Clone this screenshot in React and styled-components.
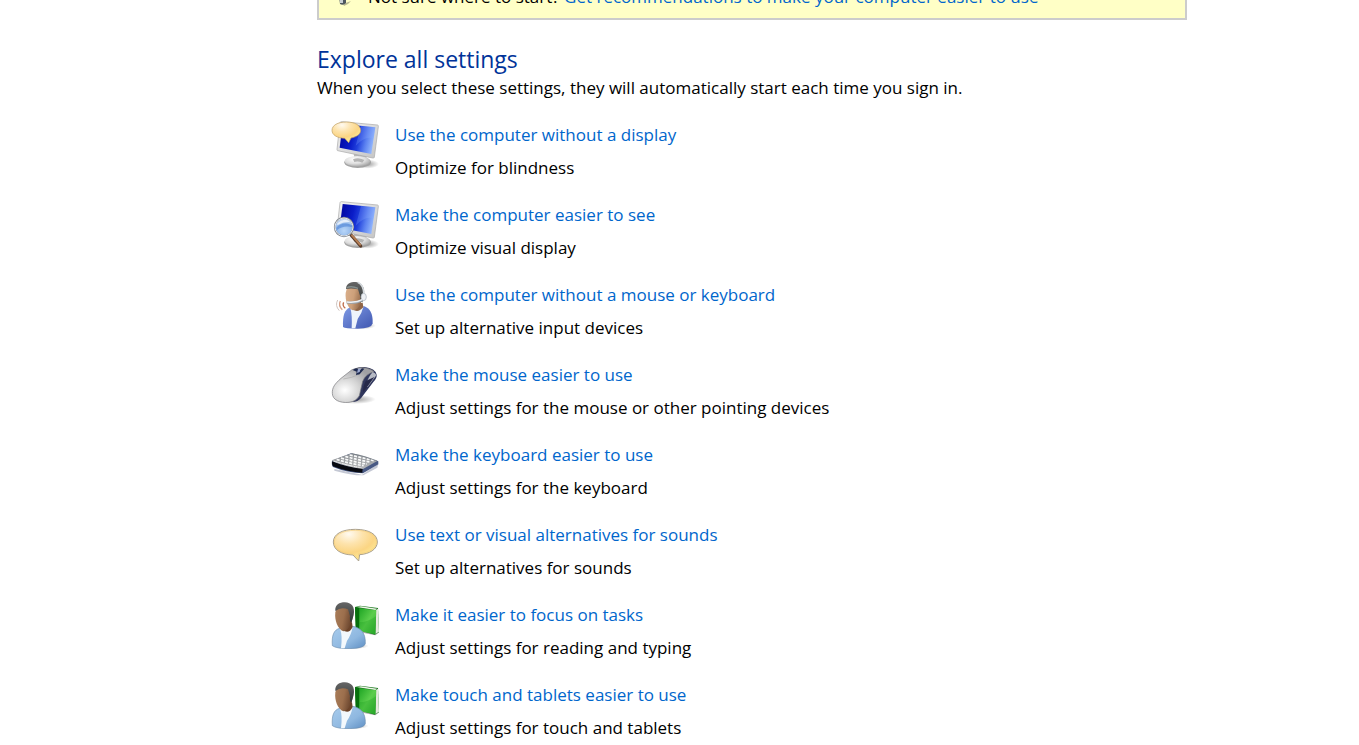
import React from "react";
import styled, { createGlobalStyle } from "styled-components";

const GlobalStyle = createGlobalStyle`
  body {
    margin: 0;
    background-color: #fff;
    color: #000;
    font-family: "Open Sans", "Noto Sans", sans-serif;
    font-size: 17px;
    overflow: hidden;
  }
`;

const Page = styled.main`
  display: flow-root;
  padding: 0 172px 0 317px;
`;

/* the page is scrolled a little, so the banner starts above the window */
const Banner = styled.div`
  display: flex;
  align-items: center;
  gap: 16px;
  margin: -26px 0 23px;
  padding: 9px 17px;
  border: solid 2px #cccccc;
  background-color: #ffffc6;
`;

const BannerText = styled.p`
  margin: 0;
  line-height: 24px;
`;

const Link = styled.a`
  color: #0066cc;
  text-decoration: none;

  &:hover {
    text-decoration: underline;
  }
`;

const Title = styled.h1`
  margin: 0;
  color: #003399;
  font-size: 23px;
  font-weight: 400;
  line-height: 32px;
`;

const Intro = styled.p`
  margin: 0 0 18px;
  line-height: 25px;
`;

const SettingsList = styled.ul`
  display: flex;
  flex-flow: column nowrap;
  gap: 14px;
  margin: 0;
  padding: 0 0 0 14px;
  list-style: none;
`;

const Setting = styled.li`
  display: flex;
  align-items: flex-start;
  gap: 16px;
  line-height: 33px;
`;

const Description = styled.p`
  margin: 0;
`;

const IconSvg = styled.svg`
  flex: none;
  display: block;
  width: 48px;
  height: 48px;
  margin-top: 3px;
`;

const BulbSvg = styled.svg`
  flex: none;
  display: block;
  width: 16px;
  height: 24px;
`;

const DefsSvg = styled.svg`
  display: block;
  width: 0;
  height: 0;
`;

const Gradients = () => (
  <DefsSvg aria-hidden="true">
    <defs>
      <linearGradient id="screen" x1="0" y1="0.35" x2="1" y2="0.55">
        <stop offset="0" stopColor="#0008a0" />
        <stop offset="0.35" stopColor="#0a1cc8" />
        <stop offset="0.55" stopColor="#2040dc" />
        <stop offset="0.75" stopColor="#5a80f0" />
        <stop offset="1" stopColor="#9cc0ff" />
      </linearGradient>
      <linearGradient id="frame" x1="0" y1="0" x2="1" y2="1">
        <stop offset="0" stopColor="#f4f4f4" />
        <stop offset="1" stopColor="#c4c4c4" />
      </linearGradient>
      <radialGradient id="stand" cx="0.4" cy="0.3" r="0.7">
        <stop offset="0" stopColor="#ffffff" />
        <stop offset="0.6" stopColor="#dedede" />
        <stop offset="1" stopColor="#a8a8a8" />
      </radialGradient>
      <radialGradient id="bubble" cx="0.35" cy="0.15" r="0.9">
        <stop offset="0" stopColor="#fffaf0" />
        <stop offset="0.35" stopColor="#fde3ac" />
        <stop offset="0.65" stopColor="#fbd583" />
        <stop offset="1" stopColor="#fff6a0" />
      </radialGradient>
      <radialGradient id="lens" cx="0.5" cy="0.7" r="0.7">
        <stop offset="0" stopColor="#b8d6f8" />
        <stop offset="0.6" stopColor="#8fb6ea" />
        <stop offset="1" stopColor="#dbe7f5" />
      </radialGradient>
      <linearGradient id="skin" x1="0" y1="0.2" x2="1" y2="0.5">
        <stop offset="0" stopColor="#d9ae8a" />
        <stop offset="0.5" stopColor="#cda07a" />
        <stop offset="1" stopColor="#8f6546" />
      </linearGradient>
      <linearGradient id="darkSkin" x1="0" y1="0.2" x2="1" y2="0.5">
        <stop offset="0" stopColor="#a87c58" />
        <stop offset="0.5" stopColor="#9c6f4d" />
        <stop offset="1" stopColor="#64402a" />
      </linearGradient>
      <linearGradient id="hair" x1="0" y1="0" x2="0" y2="1">
        <stop offset="0" stopColor="#666666" />
        <stop offset="1" stopColor="#303636" />
      </linearGradient>
      <linearGradient id="vest" x1="0" y1="0" x2="1" y2="1">
        <stop offset="0" stopColor="#7f9be6" />
        <stop offset="1" stopColor="#4057b0" />
      </linearGradient>
      <linearGradient id="shirt" x1="0" y1="0" x2="1" y2="1">
        <stop offset="0" stopColor="#a9cdee" />
        <stop offset="0.6" stopColor="#8fb8e0" />
        <stop offset="1" stopColor="#5f8fc4" />
      </linearGradient>
      <linearGradient id="cover" x1="0" y1="0" x2="1" y2="1">
        <stop offset="0" stopColor="#1fa524" />
        <stop offset="0.5" stopColor="#5cce4c" />
        <stop offset="1" stopColor="#2bac2c" />
      </linearGradient>
      <radialGradient id="mouseBody" cx="0.3" cy="0.65" r="0.7">
        <stop offset="0" stopColor="#ffffff" />
        <stop offset="0.5" stopColor="#d4d4d4" />
        <stop offset="1" stopColor="#a0a0a4" />
      </radialGradient>
      <linearGradient id="keys" x1="0" y1="0" x2="0" y2="1">
        <stop offset="0" stopColor="#8e9296" />
        <stop offset="1" stopColor="#b4b6b8" />
      </linearGradient>
      <radialGradient id="shadow">
        <stop offset="0" stopColor="#000" stopOpacity="0.4" />
        <stop offset="1" stopColor="#000" stopOpacity="0" />
      </radialGradient>
    </defs>
  </DefsSvg>
);

const Icon = ({ children }) => (
  <IconSvg viewBox="18 18 144 144" aria-hidden="true">
    {children}
  </IconSvg>
);

const Monitor = () => (
  <>
    <ellipse cx="126" cy="147" rx="36" ry="14" fill="url(#shadow)" />
    <path d="M84 110L125 118L124 140L92 140Z" fill="#b8b8b8" />
    <ellipse cx="98" cy="142" rx="40" ry="17" fill="#a2a2a2" />
    <ellipse cx="97" cy="139" rx="38" ry="16" fill="url(#stand)" />
    <path d="M84 133Q100 126 118 135L112 143Q98 137 88 141Z" fill="#b4b4b4" />
    <path
      d="M49 20L158 30Q161 31 160 35L148 127Q147 130 143 129L38 107Q35 106 36 103L45 23Q46 20 49 20Z"
      fill="url(#frame)"
      stroke="#a8a8a8"
      strokeWidth="2"
    />
    <path d="M53 27L151 37L139 117L44 98Z" fill="url(#screen)" />
    <path d="M108 33L151 37L146 70Q120 62 92 92Z" fill="#8fb0ff" opacity="0.25" />
  </>
);

const DisplayIcon = () => (
  <Icon>
    <Monitor />
    <path
      d="M64 21C90 21 107 31 107 46C107 58 95 66 78 69L71 83L59 70C36 69 21 60 21 46C21 31 38 21 64 21Z"
      fill="url(#bubble)"
      stroke="#bd9b5d"
      strokeWidth="2"
    />
  </Icon>
);

const MagnifierIcon = () => (
  <Icon>
    <Monitor />
    <path d="M78 120L107 153" stroke="#5a3c2a" strokeWidth="10" strokeLinecap="round" />
    <path d="M81 121L105 149" stroke="#b57e54" strokeWidth="6" strokeLinecap="round" />
    <circle cx="57" cy="96" r="28" fill="url(#lens)" stroke="#777e88" strokeWidth="5" />
    <circle cx="57" cy="96" r="27" fill="none" stroke="#e3e6ea" strokeWidth="3" />
    <path d="M34 98Q55 77 82 91L82 97Q56 90 35 106Z" fill="#4f83d5" opacity="0.6" />
    <path d="M37 85Q57 66 75 81Q55 80 37 91Z" fill="#fff" opacity="0.7" />
  </Icon>
);

const HeadsetIcon = () => (
  <Icon>
    <ellipse cx="112" cy="152" rx="40" ry="11" fill="url(#shadow)" />
    <path
      d="M54 156C53 123 57 104 77 96L116 93C135 99 144 115 143 145Q140 161 98 161Q60 161 54 156Z"
      fill="url(#vest)"
    />
    <path d="M76 98L116 94Q111 114 98 132L91 160H80Q82 120 76 98Z" fill="#eef4fc" />
    <path d="M81 88L113 83L115 97Q97 117 82 101Z" fill="#8f6547" />
    <path
      d="M66 38C77 27 103 32 111 47C116 70 106 104 84 106C68 101 60 75 62 54Z"
      fill="url(#skin)"
    />
    <path
      d="M63 42C63 26 76 21 91 21C108 21 121 36 117 58L112 82Q105 78 106 65L99 43Q79 38 63 42Z"
      fill="url(#hair)"
    />
    <path d="M64 39Q78 31 99 40" fill="none" stroke="#86908f" strokeWidth="4" />
    <path d="M98 22Q116 29 117 59" fill="none" stroke="#d5dade" strokeWidth="5" />
    <ellipse cx="116" cy="66" rx="8" ry="11" fill="#edf0f4" stroke="#a6afb8" strokeWidth="2" />
    <path d="M112 75Q94 86 65 82" fill="none" stroke="#98a3ac" strokeWidth="7" />
    <path d="M112 74Q94 84 66 81" fill="none" stroke="#eef0f4" strokeWidth="4" />
    <path d="M56 82Q51 92 61 100" fill="none" stroke="#bf6e4e" strokeWidth="4" />
    <path d="M46 78Q39 92 52 104" fill="none" stroke="#d7a086" strokeWidth="4" />
    <path d="M38 75Q29 92 43 107" fill="none" stroke="#d0c4bf" strokeWidth="3" />
  </Icon>
);

const MouseIcon = () => (
  <Icon>
    <ellipse cx="91" cy="133" rx="61" ry="14" fill="url(#shadow)" />
    <path
      d="M76 52Q95 34 119 36Q151 40 155 59Q157 68 145 81L109 128Q97 143 73 140Z"
      fill="#30365c"
    />
    <path
      d="M22 115C21 98 29 87 48 70L81 44Q103 34 123 39Q140 43 147 50Q121 57 113 79L103 122Q94 139 72 142C44 145 22 134 22 115Z"
      fill="url(#mouseBody)"
      stroke="#77777b"
      strokeWidth="2"
    />
    <path
      d="M83 45Q90 39 97 40L103 48L111 40L118 41L104 58L93 61L95 50Z"
      fill="#202b50"
    />
    <path d="M99 42L107 39L104 51L96 54Z" fill="#9aa8d0" />
    <path d="M143 51Q152 54 154 61L128 96L120 96Q129 66 143 51Z" fill="#b6bac4" />
    <path d="M122 78L148 66L133 87L115 112Q112 99 122 78Z" fill="#252849" />
    <path d="M55 72Q83 68 98 60" fill="none" stroke="#aaa" strokeWidth="2" />
  </Icon>
);

const KeyboardIcon = () => (
  <Icon>
    <path d="M28 102L111 119L160 86L157 98L115 121Q84 122 28 107Z" fill="#c4c8d4" />
    <path
      d="M21 77L78 55Q115 64 160 79V88L114 115Q67 114 24 96Q19 91 21 77Z"
      fill="#485984"
    />
    <path d="M21 79Q66 97 113 100L112 113Q70 112 24 94Q20 90 21 79Z" fill="#080a11" />
    <path d="M22 75L80 55Q117 61 157 78L114 102Q63 96 22 79Z" fill="url(#keys)" />
    <path
      d="M35 73Q78 87 116 92M48 69Q91 82 126 87M61 64Q101 76 136 81M74 60Q112 68 147 77"
      fill="none"
      stroke="#f9fafa"
      strokeWidth="5"
      strokeDasharray="9 4"
    />
    <path d="M26 78Q72 93 110 98" fill="none" stroke="#f1f1f1" strokeWidth="3" strokeDasharray="12 2 8 2 35 2" />
    <path d="M80 56Q116 62 157 78" fill="none" stroke="#6e7580" strokeWidth="2" />
  </Icon>
);

const BubbleIcon = () => (
  <Icon>
    <path
      d="M91 43C132 43 157 58 157 81C157 103 133 117 104 119L101 138L84 120C48 119 25 104 25 81C25 58 50 43 91 43Z"
      fill="url(#bubble)"
      stroke="#aaa18f"
      strokeWidth="3"
    />
    <path
      d="M91 46C130 46 154 60 154 81C154 101 130 114 101 116L99 130L86 117C50 116 28 102 28 81C28 60 52 46 91 46Z"
      fill="none"
      stroke="#f5cf7f"
      strokeWidth="2"
    />
  </Icon>
);

const BookIcon = () => (
  <Icon>
    <path d="M101 111L151 121L164 111L156 105Z" fill="#555" opacity="0.5" />
    <path d="M90 36L105 32L159 39L162 111L149 119L93 103Z" fill="#1b7a1f" />
    <path d="M95 36L108 34L156 41L151 45Z" fill="#f1f4e9" />
    <path d="M153 45L159 41L162 110L151 117Z" fill="#e6e9df" />
    <path d="M90 36L103 40L103 108L92 103Z" fill="#07700e" />
    <path d="M103 40L154 46L151 118L103 108Z" fill="url(#cover)" />
    <path d="M103 82Q128 82 153 64L151 118L103 108Z" fill="#119316" opacity="0.25" />
    <ellipse cx="82" cy="153" rx="49" ry="10" fill="url(#shadow)" />
    <path
      d="M22 152C20 121 26 105 44 100L84 94C108 99 122 114 121 146Q118 160 73 161Q34 161 22 152Z"
      fill="url(#shirt)"
      stroke="#6f91b2"
      strokeWidth="2"
    />
    <path d="M45 101L83 95Q79 119 66 137L59 160H48Q53 122 45 101Z" fill="#f3f8fc" />
    <path d="M49 85L81 82L83 96Q70 121 52 103Z" fill="#6d442a" />
    <path
      d="M36 38C47 27 75 33 82 48C88 70 74 106 55 109C38 103 28 76 31 52Z"
      fill="url(#darkSkin)"
    />
    <path
      d="M31 48C29 29 43 22 60 22C79 23 91 35 86 60L79 83Q73 77 75 63L69 43Q48 34 31 48Z"
      fill="url(#hair)"
    />
  </Icon>
);

const BulbIcon = () => (
  <BulbSvg viewBox="0 0 16 24" aria-hidden="true">
    <circle cx="7" cy="6" r="5" fill="#ffe88a" stroke="#b5a254" />
    <path d="M7 19L15 16L12 19L8 21Z" fill="#8a8a70" opacity="0.6" />
    <path d="M3 11H10V18Q7 21 4 19Z" fill="#4d5660" />
    <path d="M4 12H7V18H4Z" fill="#c7ced4" />
  </BulbSvg>
);

const settings = [
  {
    icon: DisplayIcon,
    title: "Use the computer without a display",
    description: "Optimize for blindness"
  },
  {
    icon: MagnifierIcon,
    title: "Make the computer easier to see",
    description: "Optimize visual display"
  },
  {
    icon: HeadsetIcon,
    title: "Use the computer without a mouse or keyboard",
    description: "Set up alternative input devices"
  },
  {
    icon: MouseIcon,
    title: "Make the mouse easier to use",
    description: "Adjust settings for the mouse or other pointing devices"
  },
  {
    icon: KeyboardIcon,
    title: "Make the keyboard easier to use",
    description: "Adjust settings for the keyboard"
  },
  {
    icon: BubbleIcon,
    title: "Use text or visual alternatives for sounds",
    description: "Set up alternatives for sounds"
  },
  {
    icon: BookIcon,
    title: "Make it easier to focus on tasks",
    description: "Adjust settings for reading and typing"
  },
  {
    icon: BookIcon,
    title: "Make touch and tablets easier to use",
    description: "Adjust settings for touch and tablets"
  }
];

const App = () => (
  <>
    <GlobalStyle />
    <Gradients />
    <Page>
      <Banner>
        <BulbIcon />
        <BannerText>
          Not sure where to start?{" "}
          <Link href="#recommendations">
            Get recommendations to make your computer easier to use
          </Link>
        </BannerText>
      </Banner>
      <Title>Explore all settings</Title>
      <Intro>
        When you select these settings, they will automatically start each time
        you sign in.
      </Intro>
      <SettingsList>
        {settings.map(({ icon: SettingIcon, title, description }) => (
          <Setting key={title}>
            <SettingIcon />
            <div>
              <Link href="#setting">{title}</Link>
              <Description>{description}</Description>
            </div>
          </Setting>
        ))}
      </SettingsList>
    </Page>
  </>
);

export default App;
